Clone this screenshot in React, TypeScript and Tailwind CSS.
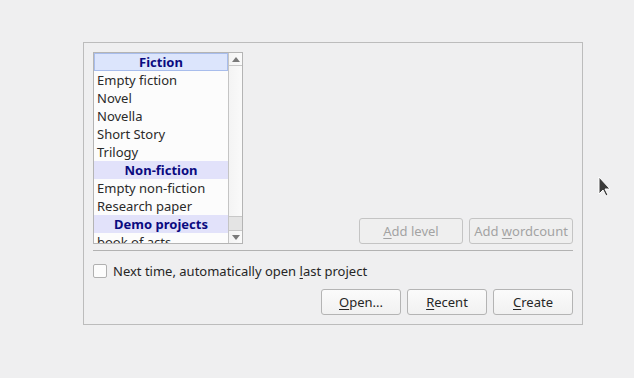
import React from "react";

const font = { fontFamily: '"Noto Sans", "Open Sans", sans-serif' };

function Header({ label, selected }: { label: string; selected?: boolean }) {
  return (
    <div
      className={
        "h-[18px] flex items-center justify-center font-bold text-[13px] leading-none text-[#0a0a80] " +
        (selected ? "bg-[#dce5fc] border border-[#a8bdec]" : "bg-[#e2e2fa]")
      }
    >
      {label}
    </div>
  );
}

function Item({ label }: { label: string }) {
  return (
    <div className="h-[18px] flex items-center pl-[3px] text-[13px] leading-none text-[#2a2a2a] bg-[#fcfcfc] whitespace-nowrap">
      {label}
    </div>
  );
}

function Btn({ children, disabled, w }: { children: React.ReactNode; disabled?: boolean; w: string }) {
  return (
    <div
      className={
        "h-[26px] flex items-center justify-center pt-[1px] rounded-[3px] border text-[13px] " +
        w +
        (disabled
          ? " border-[#c4c4c4] bg-[#efefef] text-[#a3a3a3]"
          : " border-[#b4b4b4] bg-gradient-to-b from-[#fbfbfb] to-[#f1f1f1] text-[#262626]")
      }
    >
      {children}
    </div>
  );
}

export default function App() {
  return (
    <div className="w-[634px] h-[378px] bg-[#efeff0] relative overflow-hidden" style={font}>
      <div className="pt-[42px] pl-[83px]">
        <div className="w-[500px] h-[283px] border border-[#bcbcbc] p-[9px] flex flex-col">
          <div className="flex items-end">
            <div className="w-[150px] h-[192px] border border-[#b4b4b4] flex bg-[#fcfcfc]">
              <div className="flex-1 overflow-hidden">
                <Header label="Fiction" selected />
                <Item label="Empty fiction" />
                <Item label="Novel" />
                <Item label="Novella" />
                <Item label="Short Story" />
                <Item label="Trilogy" />
                <Header label="Non-fiction" />
                <Item label="Empty non-fiction" />
                <Item label="Research paper" />
                <Header label="Demo projects" />
                <Item label="book of acts" />
              </div>
              <div className="w-[14px] border-l border-[#c4c4c4] flex flex-col bg-gradient-to-r from-[#f4f4f4] to-[#fafafa]">
                <div className="h-[13px] border-b border-[#c8c8c8] flex items-center justify-center">
                  <svg width="8" height="5" viewBox="0 0 8 5">
                    <path d="M0 5 L4 0 L8 5 Z" fill="#7a7a7a" />
                  </svg>
                </div>
                <div className="flex-1" />
                <div className="h-[14px] bg-[#e4e4e4] border-t border-[#c8c8c8]" />
                <div className="h-[13px] border-t border-[#c8c8c8] flex items-center justify-center">
                  <svg width="8" height="5" viewBox="0 0 8 5">
                    <path d="M0 0 L4 5 L8 0 Z" fill="#7a7a7a" />
                  </svg>
                </div>
              </div>
            </div>
            <div className="flex-1" />
            <div className="flex gap-[6px]">
              <Btn disabled w="w-[104px]">
                <span>
                  <span className="underline underline-offset-2">A</span>dd level
                </span>
              </Btn>
              <Btn disabled w="w-[104px]">
                <span>
                  Add <span className="underline underline-offset-2">w</span>ordcount
                </span>
              </Btn>
            </div>
          </div>
          <div className="mt-[6px] h-px bg-[#b2b2b2]" />
          <div className="mt-[13px] flex items-center gap-[6px] h-[14px]">
            <div className="w-[14px] h-[14px] border border-[#b0b0b0] rounded-[2px] bg-[#fcfcfc]" />
            <span className="text-[13px] text-[#262626] leading-none">
              Next time, automatically open <span className="underline underline-offset-2">l</span>ast project
            </span>
          </div>
          <div className="mt-[11px] flex justify-end gap-[6px]">
            <Btn w="w-[80px]">
              <span>
                <span className="underline underline-offset-2">O</span>pen...
              </span>
            </Btn>
            <Btn w="w-[80px]">
              <span>
                <span className="underline underline-offset-2">R</span>ecent
              </span>
            </Btn>
            <Btn w="w-[80px]">
              <span>
                <span className="underline underline-offset-2">C</span>reate
              </span>
            </Btn>
          </div>
        </div>
      </div>
      <svg className="absolute left-[598px] top-[176px]" width="14" height="22" viewBox="0 0 14 22">
        <path d="M1 1 L1 18 L5 14 L8 20 L10 19 L7 13 L12 13 Z" fill="#3a3a3a" stroke="#ffffff" strokeWidth="1" />
      </svg>
    </div>
  );
}
